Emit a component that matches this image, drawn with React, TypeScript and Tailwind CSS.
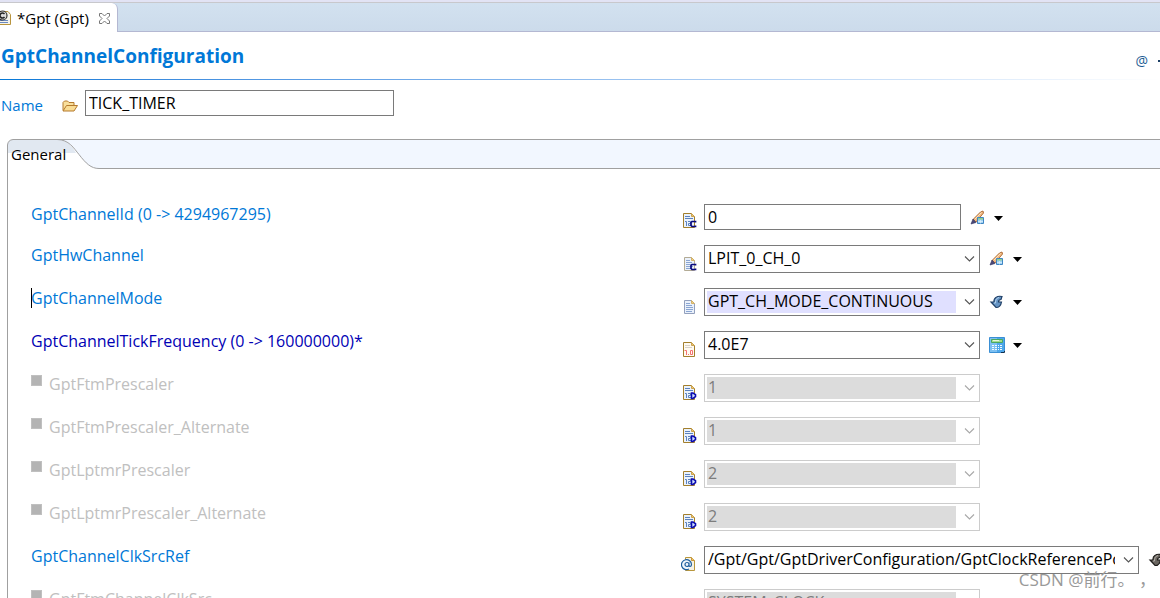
import React from "react";

type DocKind = "intConst" | "const" | "plain" | "float" | "intDefault" | "ref";
type ToolKind = "pencil" | "arrow" | "calc" | "darkArrow";

interface Field {
  label: string;
  value: string;
  doc: DocKind;
  tool?: ToolKind;
  kind?: "text";
  disabled?: boolean;
  highlight?: boolean;
  strong?: boolean;
  caret?: boolean;
  wide?: boolean;
}

const fields: Field[] = [
  { label: "GptChannelId (0 -> 4294967295)", value: "0", doc: "intConst", tool: "pencil", kind: "text" },
  { label: "GptHwChannel", value: "LPIT_0_CH_0", doc: "const", tool: "pencil" },
  { label: "GptChannelMode", value: "GPT_CH_MODE_CONTINUOUS", doc: "plain", tool: "arrow", highlight: true, caret: true },
  { label: "GptChannelTickFrequency (0 -> 160000000)*", value: "4.0E7", doc: "float", tool: "calc", strong: true },
  { label: "GptFtmPrescaler", value: "1", doc: "intDefault", disabled: true },
  { label: "GptFtmPrescaler_Alternate", value: "1", doc: "intDefault", disabled: true },
  { label: "GptLptmrPrescaler", value: "2", doc: "intDefault", disabled: true },
  { label: "GptLptmrPrescaler_Alternate", value: "2", doc: "intDefault", disabled: true },
  {
    label: "GptChannelClkSrcRef",
    value: "/Gpt/Gpt/GptDriverConfiguration/GptClockReferencePoint_0",
    doc: "ref",
    tool: "darkArrow",
    wide: true,
  },
  { label: "GptFtmChannelClkSrc", value: "SYSTEM_CLOCK", doc: "intDefault", disabled: true },
];

function DocIcon({ kind }: { kind: DocKind }) {
  if (kind === "ref") {
    return (
      <svg width="15" height="15" viewBox="0 0 15 15" className="-ml-0.5" aria-hidden="true">
        <path d="M4.500.5h6l3 3v10h-9z" fill="#f6f2e4" stroke="#b8963c" />
        <path d="M10.500.5v3h3" fill="#f0c36a" stroke="#c9963a" />
        <circle cx="5.500" cy="7.500" r="5" fill="#eef5fb" />
        <path
          d="M8 12a5 5 0 1 1 2.500-4.500c0 2.500-2.500 2.500-2.500.5V5.500M8 7.500a2 2 0 1 1-4 0 2 2 0 0 1 4 0"
          fill="none"
          stroke="#1f5f9e"
          strokeWidth="1.200"
        />
      </svg>
    );
  }
  const pale = kind === "plain" || kind === "const";
  const edge = kind === "plain" ? "#93a0bd" : kind === "const" ? "#b3ab95" : "#a37f2c";
  const isInt = kind === "intConst" || kind === "intDefault";
  return (
    <svg width="14" height="15" viewBox="0 0 14 15" aria-hidden="true">
      {pale ? (
        <g>
          <path d="M1.500 1.500h7l3 3v10h-10z" fill="#eaf1fb" stroke={edge} />
          <path d="M8.500 1.500v3h3z" fill="#f2cf86" stroke="#d2b26a" />
          <path d="M3 4.500h4M3 6.500h6M3 8.500h7M3 10.500h7M3 12.500h6" stroke="#8aa5d2" />
        </g>
      ) : (
        <g>
          <path d="M.5.5h8l3 3v11H.5z" fill={kind === "float" ? "#fffaf0" : "#eaf2fc"} stroke={edge} />
          <path d="M8.500.5v3h3z" fill="#f2c56c" stroke="#c9a352" />
        </g>
      )}
      {isInt && (
        <path
          d="M2 3.500h5M2 5.500h8M2 8.500h1.500V13M5 8.500h2.500v2h-2v2H8"
          fill="none"
          stroke="#5c82be"
        />
      )}
      {kind === "float" && (
        <g fill="none">
          <path d="M2 3.500h5M2 5.500h7" stroke="#d8d2c8" />
          <path d="M1.500 8.500h2V13M5 12.500h1M7.500 8.500h2v4h-2z" stroke="#f47272" />
        </g>
      )}
      {(kind === "intConst" || kind === "const") && (
        <path d="M12.500 9.500V8.500H9L8 9.500v3l1 1h3.500v-1" fill="none" stroke="#08087e" strokeWidth="1.700" />
      )}
      {kind === "intDefault" && (
        <path d="M8.500 8v5.500h1.500l2.500-1.800v-2L10 8z" fill="#cfe0ff" stroke="#0a0ab0" strokeWidth="1.600" />
      )}
    </svg>
  );
}

function ToolIcon({ kind }: { kind: ToolKind }) {
  if (kind === "pencil") {
    return (
      <svg width="16" height="16" viewBox="0 0 16 16" className="shrink-0" aria-hidden="true">
        <path d="M3 9.500 10.500 2l2.500-1 .5 2L6 12z" fill="#f3b980" stroke="#b0703c" />
        <path d="M5 9 11.500 2.500" stroke="#fbe3c0" />
        <path d="m3 9 3 3.500L1 14z" fill="#4b4a78" stroke="#2e2d60" strokeWidth=".6" />
        <path d="M7.500 7.500h6v6h-6z" fill="#9fd0f2" stroke="#3f86c4" />
        <path d="M8 8h5v1.500H8z" fill="#8fd08c" />
        <path d="M8 11.500h5M10.500 10v3.500" stroke="#e0f2fd" strokeWidth=".7" />
      </svg>
    );
  }
  if (kind === "calc") {
    return (
      <svg width="16" height="16" viewBox="0 0 16 16" className="shrink-0" aria-hidden="true">
        <path d="M.5.5h15v14l-1 1H.5z" fill="#4ea7ea" stroke="#3a8fd4" />
        <path d="M12 15.500h3.500V14" fill="none" stroke="#14304e" />
        <path d="M1 1h7v14H1z" fill="#7cc0f2" />
        <path d="M2.500 2.500h11v3h-11z" fill="#a5dc8e" stroke="#49a860" />
        <path d="M4 3.500h6" stroke="#e6f8dc" />
        <path d="M3 8.500h2m1 0h2m1 0h1m1 0h2m-10 2h2m1 0h2m1 0h1m1 0h2m-10 2h2m1 0h2m1 0h1m1 0h2" stroke="#f2fbff" />
      </svg>
    );
  }
  const dark = kind === "darkArrow";
  return (
    <svg width="16" height="16" viewBox="0 0 16 16" className="shrink-0" aria-hidden="true">
      <path
        d="M13 2.500C8 1.500 4.500 4 5 8H2l5 5.500c3 0 5-2.500 5.500-5.500H9.500c0-1.500 1-2.500 2.500-2.500z"
        fill={dark ? "#6a6660" : "#6594c4"}
        stroke={dark ? "#1e1c1a" : "#1f3f66"}
        strokeWidth="1.200"
      />
      <path d="M10 3.500C7.500 4 6.500 6 6.500 9H5" fill="none" stroke={dark ? "#b5b0aa" : "#b5d3ee"} />
    </svg>
  );
}

function Chevron({ muted }: { muted?: boolean }) {
  return (
    <svg width="11" height="6" viewBox="0 0 11 6" className="mr-0.5 ml-2 shrink-0 self-center" aria-hidden="true">
      <path d="m1 .5 4.500 4.500L10 .5" fill="none" stroke={muted ? "#a8a8a8" : "#555"} strokeWidth="1.100" />
    </svg>
  );
}

function Tool({ kind }: { kind: ToolKind }) {
  return (
    <button type="button" aria-label="Edit value" className="mt-1.5 ml-[9px] flex h-4 shrink-0 items-center gap-2">
      <ToolIcon kind={kind} />
      <svg width="9" height="5" viewBox="0 0 9 5" aria-hidden="true">
        <path d="M0 0h9L4.500 5z" fill="#000" />
      </svg>
    </button>
  );
}

function FieldRow({ field }: { field: Field }) {
  const id = field.label.split(" ")[0];
  const isText = field.kind === "text";
  const boxBorder = field.disabled ? "border-[#cccccc]" : "border-[#7a7a7a]";
  const fill = field.disabled
    ? "bg-[#dcdcdc] text-[#7d7d7d]"
    : field.highlight
      ? "bg-[#e0e0ff] text-black"
      : "bg-white text-black";
  const labelColor = field.disabled ? "text-[#c0c0c0]" : field.strong ? "text-[#0000b4]" : "text-[#0078d7]";
  return (
    <div className={`grid grid-cols-[652fr_477fr] items-start ${isText ? "h-[41px]" : "h-[43px]"}`}>
      <div className="flex min-w-0 items-start">
        {field.disabled && (
          <input
            type="checkbox"
            disabled
            aria-label={`Enable ${id}`}
            className="mt-px mr-[7px] size-[11px] shrink-0 appearance-none border border-[#c0c0c0] bg-[#b4b4b4]"
          />
        )}
        <label htmlFor={id} className={`whitespace-nowrap leading-5 ${labelColor} ${field.caret ? "relative" : ""}`}>
          {field.caret && <span className="absolute top-0 left-0 h-5 w-px bg-black" />}
          {field.label}
        </label>
      </div>
      <div className="flex min-w-0 items-start">
        <span className={`flex w-[21px] shrink-0 ${isText ? "mt-[9px]" : "mt-[11px]"}`}>
          <DocIcon kind={field.doc} />
        </span>
        {isText ? (
          <input
            id={id}
            defaultValue={field.value}
            className={`h-[26px] w-[257px] border px-[3px] outline-none ${boxBorder}`}
          />
        ) : (
          <span className={`flex h-7 shrink-0 border bg-white p-0.5 ${field.wide ? "w-[435px]" : "w-[276px]"} ${boxBorder}`}>
            <select
              id={id}
              disabled={field.disabled}
              defaultValue={field.value}
              className={`min-w-0 flex-1 appearance-none overflow-hidden pb-0.5 pl-px leading-5 text-clip opacity-100 outline-none ${fill}`}
            >
              <option>{field.value}</option>
            </select>
            <Chevron muted={field.disabled} />
          </span>
        )}
        {field.tool && <Tool kind={field.tool} />}
      </div>
    </div>
  );
}

export default function App() {
  return (
    <div className="relative flex h-screen flex-col overflow-hidden bg-white font-['Open_Sans','Noto_Sans_CJK_SC',sans-serif] text-base text-black">
      <div className="flex h-8 shrink-0 border-b border-[#b4b8d2] bg-linear-to-b from-[#d3e2f0] to-[#ccdbeb]">
        <div className="flex w-full flex-col">
          <div className="h-[3px] shrink-0 border-b border-[#c8c8cc] bg-[#e2e3f4]" />
          <div className="-mb-px flex h-[29px] w-[118px] items-center rounded-tr-md border-r border-[#b4b8d2] bg-white pt-px">
            <svg width="11" height="16" viewBox="0 0 11 16" className="mr-1.5 shrink-0" aria-hidden="true">
              <path d="M0 1.500h8l2.500 3v10H0" fill="#f5f3ea" stroke="#b8943e" />
              <path d="M0 10.500h8M0 12.500h8" stroke="#6a88c0" />
              <circle cx="2.500" cy="5.500" r="4.500" fill="#ddd" stroke="#333" strokeWidth="1.200" />
              <path d="M4.500 4a2.500 2.500 0 1 0 0 3" fill="none" stroke="#222" strokeWidth="1.500" />
            </svg>
            <span className="text-[15px] whitespace-nowrap">*Gpt (Gpt)</span>
            <button type="button" aria-label="Close" className="ml-2.5">
              <svg width="11" height="11" viewBox="0 0 11 11" className="block" aria-hidden="true">
                <path
                  d="M.5.5h2.500l2.500 2.500L8 .5h2.500V3L8 5.500 10.500 8v2.500H8L5.500 8 3 10.500H.5V8L3 5.500.5 3z"
                  fill="#fff"
                  stroke="#777"
                />
              </svg>
            </button>
          </div>
        </div>
      </div>

      <header className="flex h-[47px] shrink-0 items-center pl-px">
        <h1 className="text-[19px] leading-7 font-bold text-[#0078d7]">GptChannelConfiguration</h1>
        <span className="mt-2.5 ml-auto text-sm leading-4 text-[#1d5c94]">@</span>
        <span className="mt-2.5 ml-2.5 h-0.5 w-0.5 bg-[#1d3f66]" />
      </header>
      <div className="h-px shrink-0 bg-linear-to-r from-[#0078d7] to-white" />

      <div className="flex h-[59px] shrink-0 items-start pt-2.5 pl-px">
        <label htmlFor="name" className="mt-[5px] w-[61px] text-[15px] leading-5 text-[#0078d7]">
          Name
        </label>
        <svg width="16" height="12" viewBox="0 0 16 12" className="mt-2.5 mr-[7px] shrink-0" aria-hidden="true">
          <path d="M1 10.500v-8L2.500 1h3L7 2.500h5V5" fill="#f8df9c" stroke="#b57a2c" />
          <path d="m1 11 3.500-5.500h11L12 11z" fill="#f9dc94" stroke="#b57a2c" />
        </svg>
        <input id="name" defaultValue="TICK_TIMER" className="h-[26px] w-[309px] border border-[#7a7a7a] px-[3px] outline-none" />
      </div>

      <main className="ml-[7px] flex min-h-0 flex-1 flex-col">
        <div className="flex h-[30px] shrink-0">
          <button type="button" className="relative h-[30px] w-[92px] pl-1 text-left">
            <svg width="92" height="30" viewBox="0 0 92 30" className="absolute top-0 left-0" aria-hidden="true">
              <path d="M50 0h42v30H50z" fill="#f2f7ff" />
              <path d="M.5 30V6Q1 1 6 .5h44c12 0 17 9 22 15 7 9 12 14 20 14v.5z" fill="#fff" />
              <path d="M.5 14V6Q1 1 6 .5h44c9 0 15 6 19 13.500z" fill="#e1e8f1" />
              <path d="M.5 30V6Q1 1 6 .5h44c12 0 17 9 22 15 7 9 12 14 20 14" fill="none" stroke="#a0a0a0" />
              <path d="M50 .5h42" stroke="#a0a0a0" />
            </svg>
            <span className="relative text-[15px]">General</span>
          </button>
          <div className="flex-1 border-y border-[#a0a0a0] bg-[#f2f7ff]" />
        </div>
        <div className="min-h-0 flex-1 overflow-hidden border-l border-[#a0a0a0] pt-[35px] pl-[23px]">
          {fields.map((field) => (
            <FieldRow key={field.label} field={field} />
          ))}
        </div>
      </main>

      <div className="pointer-events-none absolute right-1 bottom-1.5 text-[17px] leading-6 whitespace-nowrap text-[#999999]">
        CSDN @前行。 ，
      </div>
    </div>
  );
}
